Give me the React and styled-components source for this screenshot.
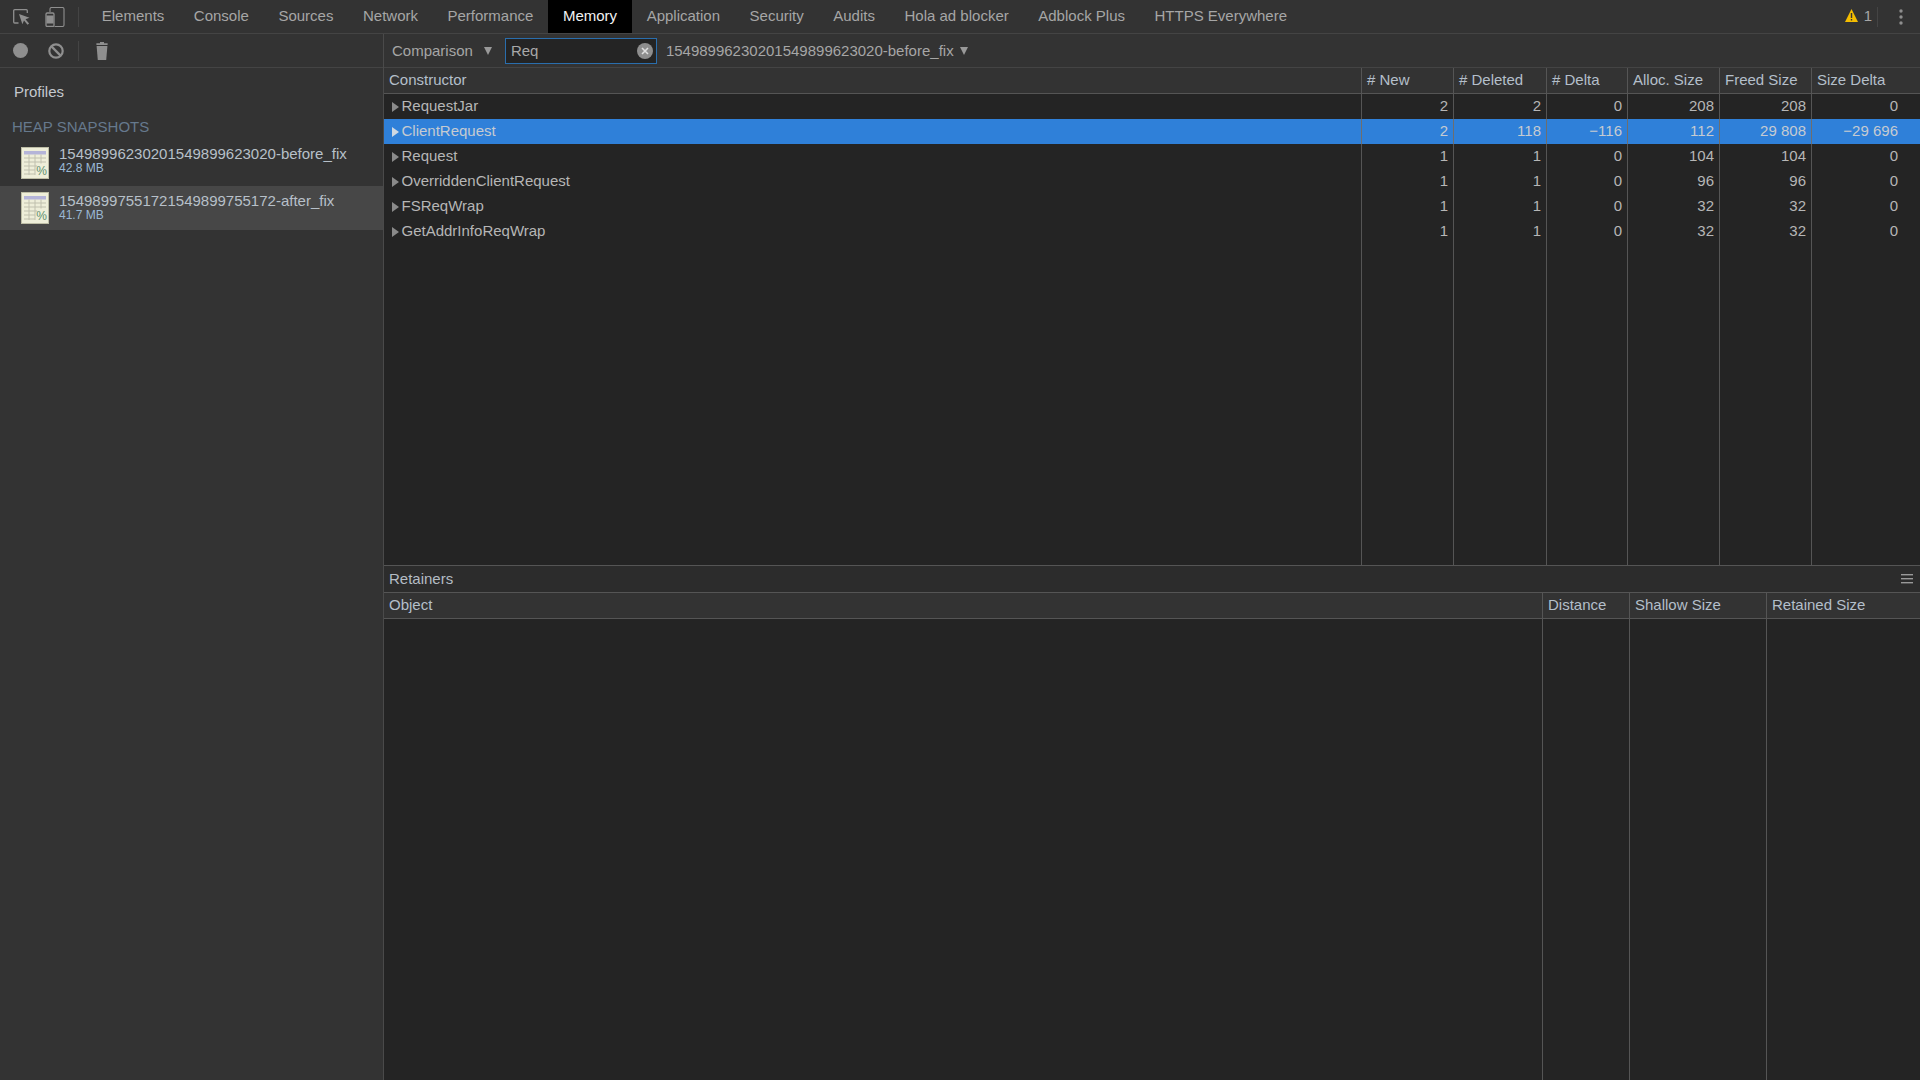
import React from 'react';
import styled, { createGlobalStyle } from 'styled-components';

const TABS = ['Elements', 'Console', 'Sources', 'Network', 'Performance', 'Memory', 'Application', 'Security', 'Audits', 'Hola ad blocker', 'Adblock Plus', 'HTTPS Everywhere'];

const SNAPSHOTS = [
  { name: '15498996230201549899623020-before_fix', size: '42.8 MB' },
  { name: '15498997551721549899755172-after_fix', size: '41.7 MB', active: true },
];

const COMPARISON_COLS = '1fr 92px 93px 81px 92px 92px 109px';
const COMPARISON_HEAD = ['Constructor', '# New', '# Deleted', '# Delta', 'Alloc. Size', 'Freed Size', 'Size Delta'];
const COMPARISON_ROWS = [
  ['RequestJar', '2', '2', '0', '208', '208', '0'],
  ['ClientRequest', '2', '118', '−116', '112', '29\u00a0808', '−29\u00a0696'],
  ['Request', '1', '1', '0', '104', '104', '0'],
  ['OverriddenClientRequest', '1', '1', '0', '96', '96', '0'],
  ['FSReqWrap', '1', '1', '0', '32', '32', '0'],
  ['GetAddrInfoReqWrap', '1', '1', '0', '32', '32', '0'],
];

const RETAINER_COLS = '1fr 87px 137px 154px';
const RETAINER_HEAD = ['Object', 'Distance', 'Shallow Size', 'Retained Size'];

const GlobalStyle = createGlobalStyle`
  html, body {
    margin: 0;
    padding: 0;
    background: #333;
    overflow: hidden;
  }
  * {
    box-sizing: border-box;
  }
`;

const Page = styled.div`
  width: 1920px;
  height: 1080px;
  display: flex;
  flex-direction: column;
  font-family: "Liberation Sans", Arial, sans-serif;
  font-size: 15px;
  color: #b4bcc4;
  background: #333;
`;

const TopBar = styled.div`
  height: 34px;
  flex: none;
  display: flex;
  align-items: stretch;
  border-bottom: 1px solid #444;
`;

const IconSlot = styled.div`
  width: ${props => props.width}px;
  flex: none;
  display: flex;
  align-items: center;
  justify-content: center;
`;

const KebabSlot = styled(IconSlot)`
  padding-left: 4px;
`;

const Divider = styled.div`
  width: 1px;
  height: 20px;
  flex: none;
  align-self: center;
  margin: ${props => props.margin};
  background: #444;
`;

const Tab = styled.div`
  padding: 0 14.78px 2px;
  display: flex;
  align-items: center;
  white-space: nowrap;
  color: ${props => props.active ? '#f2f2f2' : '#a6a6a6'};
  background: ${props => props.active ? '#000' : 'transparent'};
`;

const WarningBox = styled.div`
  margin-left: auto;
  padding-bottom: 2px;
  display: flex;
  align-items: center;
  gap: 6px;
  color: #a6a6a6;
`;

const Body = styled.div`
  flex: 1;
  min-height: 0;
  display: flex;
`;

const Sidebar = styled.div`
  width: 384px;
  flex: none;
  display: flex;
  flex-direction: column;
  border-right: 1px solid #4a4a4a;
`;

const SideToolbar = styled.div`
  height: 34px;
  flex: none;
  display: flex;
  align-items: stretch;
  border-bottom: 1px solid #444;
`;

const SideTitle = styled.div`
  margin: 15px 0 0 14px;
  line-height: 17px;
  color: #c4c9ce;
`;

const SideSection = styled.div`
  margin: 18px 0 5px 12px;
  line-height: 17px;
  color: #66798d;
`;

const SnapshotRow = styled.div`
  height: ${props => props.active ? '44px' : '46px'};
  display: flex;
  align-items: center;
  padding-left: 21px;
  background: ${props => props.active ? '#474747' : 'transparent'};
`;

const SnapshotText = styled.div`
  margin: 0 0 ${props => props.active ? '1px' : '5px'} 10px;
  display: flex;
  flex-direction: column;
`;

const SnapshotName = styled.div`
  line-height: 16px;
  color: #b7c0c9;
  white-space: nowrap;
`;

const SnapshotSize = styled.div`
  font-size: 12px;
  line-height: 13px;
  color: #9ab8d4;
`;

const Main = styled.div`
  flex: 1;
  min-width: 0;
  display: flex;
  flex-direction: column;
`;

const MainToolbar = styled.div`
  height: 34px;
  flex: none;
  display: flex;
  align-items: center;
  padding-left: 8px;
  border-bottom: 1px solid #444;
  color: #a6a6a6;
`;

const Triangle = styled.span`
  width: 0;
  height: 0;
  flex: none;
  margin: ${props => props.margin};
  border-left: 4.5px solid transparent;
  border-right: 4.5px solid transparent;
  border-top: 8px solid #999;
`;

const Filter = styled.div`
  width: 152px;
  height: 26px;
  flex: none;
  display: flex;
  align-items: center;
  justify-content: space-between;
  padding: 0 3px 0 5px;
  background: #242424;
  border: 1px solid #2a6ead;
  color: #a8a8a8;
`;

const SnapshotSelect = styled.span`
  margin-left: 9px;
  white-space: nowrap;
`;

const Grid = styled.div`
  display: flex;
  flex-direction: column;
  flex: ${props => props.fill ? '1' : 'none'};
  height: ${props => props.fill ? 'auto' : '498px'};
  min-height: 0;
  background: #242424;
  border-bottom: ${props => props.fill ? 'none' : '1px solid #555'};
`;

const GridHead = styled.div`
  height: 26px;
  flex: none;
  display: grid;
  grid-template-columns: ${props => props.cols};
  background: #333;
  border-bottom: 1px solid #555;
`;

const HeadCell = styled.div`
  padding-left: 5px;
  line-height: 23px;
  white-space: nowrap;
  color: #b4bfca;
  border-left: ${props => props.first ? 'none' : '1px solid #555'};
`;

const GridRow = styled.div`
  height: 25px;
  flex: none;
  display: grid;
  grid-template-columns: ${props => props.cols};
  background: ${props => props.selected ? '#2f80d9' : 'transparent'};
  color: ${props => props.selected ? '#c6cbd1' : '#b6b6b6'};
`;

const FillerRow = styled(GridRow)`
  flex: 1;
  height: auto;
`;

const NameCell = styled.div`
  display: flex;
  align-items: center;
  padding: 0 0 2px 7.5px;
  white-space: nowrap;
`;

const Arrow = styled.span`
  width: 0;
  height: 0;
  flex: none;
  margin: 2px 3px 0 0;
  border-top: 5px solid transparent;
  border-bottom: 5px solid transparent;
  border-left: 7px solid ${props => props.selected ? '#cfd8e2' : '#8a8a8a'};
`;

const NumCell = styled.div`
  line-height: 23px;
  text-align: right;
  white-space: nowrap;
  padding-right: ${props => props.last ? '22px' : '5px'};
  border-left: 1px solid ${props => props.selected ? '#6e6e6e' : '#555'};
`;

const EmptyCell = styled.div`
  border-left: ${props => props.first ? 'none' : '1px solid #555'};
`;

const PaneTitle = styled.div`
  height: 27px;
  flex: none;
  display: flex;
  align-items: center;
  justify-content: space-between;
  padding: 0 7px 0 5px;
  background: #2c2c2c;
  border-bottom: 1px solid #555;
  color: #b4bcc4;
`;

const PaneLabel = styled.span`
  margin-bottom: 2px;
`;

const InspectIcon = () => (
  <svg width="17" height="16" viewBox="0 0 17 16" fill="none">
    <path d="M5.5 14H1.7a1 1 0 0 1-1-1V1.7a1 1 0 0 1 1-1h11.6a1 1 0 0 1 1 1V4" stroke="#8f8f8f" strokeWidth="1.3" />
    <path d="M6 5l10.5 3.8-4 1.4 3.6 4.2-1.6 1.4-3.5-4.2-1.6 3.6z" fill="#8f8f8f" />
  </svg>
);

const DeviceIcon = () => (
  <svg width="20" height="20" viewBox="0 0 20 20" fill="none">
    <path d="M5 5V2a1.5 1.5 0 0 1 1.5-1.5h11A1.5 1.5 0 0 1 19 2v16a1.5 1.5 0 0 1-1.5 1.5H9.5" stroke="#8f8f8f" strokeWidth="1.1" />
    <rect x="1" y="6" width="8" height="13.5" rx="1.2" stroke="#8f8f8f" strokeWidth="1.3" />
    <rect x="1.5" y="8.5" width="7" height="8" fill="#8f8f8f" />
  </svg>
);

const WarningIcon = () => (
  <svg width="13" height="13" viewBox="0 0 13 13">
    <path d="M6.5 0L13 13H0z" fill="#f4bd00" />
    <rect x="5.8" y="4" width="1.4" height="5" fill="#333" />
    <rect x="5.8" y="10" width="1.4" height="1.5" fill="#333" />
  </svg>
);

const KebabIcon = () => (
  <svg width="4" height="16" viewBox="0 0 4 16" fill="#8f8f8f">
    <circle cx="2" cy="2" r="1.7" />
    <circle cx="2" cy="8" r="1.7" />
    <circle cx="2" cy="14" r="1.7" />
  </svg>
);

const RecordIcon = () => (
  <svg width="15" height="15" viewBox="0 0 15 15">
    <circle cx="7.5" cy="7.5" r="7.5" fill="#8f8f8f" />
  </svg>
);

const ClearIcon = () => (
  <svg width="16" height="16" viewBox="0 0 16 16" fill="none" stroke="#8f8f8f" strokeWidth="2.2">
    <circle cx="8" cy="8" r="6.7" />
    <path d="M3.4 3.4l9.2 9.2" />
  </svg>
);

const TrashIcon = () => (
  <svg width="12" height="18" viewBox="0 0 12 18" fill="#8f8f8f">
    <path d="M4 0h4v1.2h3.6V3H.4V1.2H4z" />
    <path d="M.6 4h10.8l-1.2 14H1.8z" />
  </svg>
);

const FilterClearIcon = () => (
  <svg width="16" height="16" viewBox="0 0 16 16">
    <circle cx="8" cy="8" r="8" fill="#8e8e8e" />
    <path d="M5 5l6 6M11 5l-6 6" stroke="#e0e0e0" strokeWidth="1.6" />
  </svg>
);

const MenuIcon = () => (
  <svg width="12" height="10" viewBox="0 0 12 10" fill="#999">
    <rect y="0" width="12" height="1.4" />
    <rect y="4" width="12" height="1.4" />
    <rect y="8" width="12" height="1.4" />
  </svg>
);

const HeapIcon = () => (
  <svg width="28" height="32" viewBox="0 0 28 32">
    <rect width="28" height="32" rx="1" fill="#eeeed9" />
    <rect x="0.5" y="0.5" width="27" height="31" fill="none" stroke="#bdbda6" />
    <rect x="3" y="4" width="22" height="3.5" fill="#b4b4d8" />
    <path d="M3 11h22M3 15h22M3 19h13M3 23h11M3 27h11M8 7.5v20.5M14 7.5v20.5M20 7.5v9" stroke="#c0c0ae" strokeWidth="1" />
    <text x="20.5" y="28" fontSize="12" fontFamily="Liberation Sans, sans-serif" textAnchor="middle" fill="#5f9070">%</text>
  </svg>
);

const App = () => (
  <Page>
    <GlobalStyle />
    <TopBar>
      <IconSlot width={42}><InspectIcon /></IconSlot>
      <IconSlot width={25}><DeviceIcon /></IconSlot>
      <Divider margin="0 8px 0 11px" />
      {TABS.map(tab => (
        <Tab key={tab} active={tab === 'Memory'}>{tab}</Tab>
      ))}
      <WarningBox>
        <WarningIcon />
        <span>1</span>
      </WarningBox>
      <Divider margin="0 0 0 5px" />
      <KebabSlot width={42}><KebabIcon /></KebabSlot>
    </TopBar>
    <Body>
      <Sidebar>
        <SideToolbar>
          <IconSlot width={41}><RecordIcon /></IconSlot>
          <IconSlot width={30}><ClearIcon /></IconSlot>
          <Divider margin="0 0 0 7px" />
          <IconSlot width={45}><TrashIcon /></IconSlot>
        </SideToolbar>
        <SideTitle>Profiles</SideTitle>
        <SideSection>HEAP SNAPSHOTS</SideSection>
        {SNAPSHOTS.map(snap => (
          <SnapshotRow key={snap.name} active={snap.active}>
            <HeapIcon />
            <SnapshotText active={snap.active}>
              <SnapshotName>{snap.name}</SnapshotName>
              <SnapshotSize>{snap.size}</SnapshotSize>
            </SnapshotText>
          </SnapshotRow>
        ))}
      </Sidebar>
      <Main>
        <MainToolbar>
          <span>Comparison</span>
          <Triangle margin="0 13px 0 11px" />
          <Filter>
            <span>Req</span>
            <FilterClearIcon />
          </Filter>
          <SnapshotSelect>15498996230201549899623020-before_fix</SnapshotSelect>
          <Triangle margin="0 0 0 6px" />
        </MainToolbar>
        <Grid>
          <GridHead cols={COMPARISON_COLS}>
            {COMPARISON_HEAD.map((label, i) => (
              <HeadCell key={label} first={i === 0}>{label}</HeadCell>
            ))}
          </GridHead>
          {COMPARISON_ROWS.map(([name, ...nums]) => {
            const selected = name === 'ClientRequest';
            return (
              <GridRow key={name} cols={COMPARISON_COLS} selected={selected}>
                <NameCell>
                  <Arrow selected={selected} />
                  {name}
                </NameCell>
                {nums.map((num, i) => (
                  <NumCell key={i} selected={selected} last={i === nums.length - 1}>{num}</NumCell>
                ))}
              </GridRow>
            );
          })}
          <FillerRow cols={COMPARISON_COLS}>
            {COMPARISON_HEAD.map((label, i) => (
              <EmptyCell key={label} first={i === 0} />
            ))}
          </FillerRow>
        </Grid>
        <PaneTitle>
          <PaneLabel>Retainers</PaneLabel>
          <MenuIcon />
        </PaneTitle>
        <Grid fill>
          <GridHead cols={RETAINER_COLS}>
            {RETAINER_HEAD.map((label, i) => (
              <HeadCell key={label} first={i === 0}>{label}</HeadCell>
            ))}
          </GridHead>
          <FillerRow cols={RETAINER_COLS}>
            {RETAINER_HEAD.map((label, i) => (
              <EmptyCell key={label} first={i === 0} />
            ))}
          </FillerRow>
        </Grid>
      </Main>
    </Body>
  </Page>
);

export default App;
